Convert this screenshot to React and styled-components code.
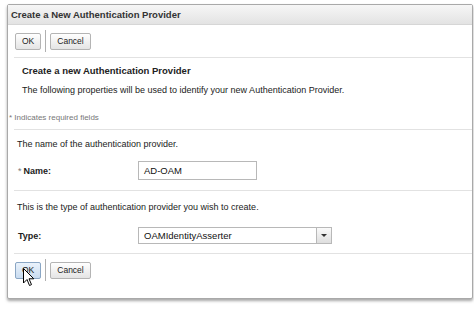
import React from "react";
import styled, { createGlobalStyle } from "styled-components";

const GlobalStyle = createGlobalStyle`
  body {
    margin: 0;
    background: #ffffff;
    font-family: "Liberation Sans", Arial, sans-serif;
    color: #222;
  }
`;

const Page = styled.div`
  width: 474px;
  height: 317px;
  padding: 4px 1px 0 7px;
  box-sizing: border-box;
`;

const Panel = styled.div`
  position: relative;
  height: 295px;
  border: 1px solid #a9a9a9;
  border-radius: 2px;
  box-shadow: 0 2px 3px rgba(0, 0, 0, 0.35);
  background: #fff;
  box-sizing: border-box;
`;

const Header = styled.div`
  height: 19px;
  display: flex;
  align-items: center;
  padding-left: 3px;
  background: linear-gradient(#f6f6f6, #e3e3e3);
  border-bottom: 1px solid #d6d6d6;
  font-size: 9.5px;
  font-weight: bold;
  color: #333;
`;

const Toolbar = styled.div`
  display: flex;
  align-items: center;
  gap: 4px;
  height: 32px;
  padding-left: 7px;
  margin-left: ${(p) => p.indent || 0}px;
  border-top: ${(p) => (p.divided ? "1px solid #e2e2e2" : "none")};
`;

const Button = styled.button`
  height: 17px;
  padding: 0 6px;
  font-family: "Liberation Sans", Arial, sans-serif;
  font-size: 8.5px;
  color: #222;
  border: 1px solid ${(p) => (p.hover ? "#8aa6c4" : "#b4b4b4")};
  border-radius: 2px;
  background: ${(p) =>
    p.hover
      ? "linear-gradient(#eaf2fb, #c9dcf0)"
      : "linear-gradient(#ffffff, #e4e4e4)"};
  min-width: ${(p) => p.min || 0}px;
`;

const Separator = styled.div`
  width: 1px;
  height: 22px;
  background: #b0b0b0;
`;

const Section = styled.div`
  margin-left: 6px;
  margin-top: ${(p) => p.gap || 0}px;
  border-top: 1px solid #e2e2e2;
  padding-top: ${(p) => p.pad || 0}px;
`;

const Title = styled.div`
  font-size: 9.5px;
  font-weight: bold;
  color: #222;
  padding-left: 8px;
  line-height: 11px;
`;

const Text = styled.div`
  font-size: 9px;
  color: #222;
  padding-left: ${(p) => p.indent || 3}px;
  line-height: 11px;
  margin-top: ${(p) => p.top || 0}px;
`;

const Hint = styled.div`
  font-size: 8px;
  color: #777;
  line-height: 10px;
  margin: 17px 0 0 -5px;
`;

const FieldRow = styled.div`
  display: flex;
  align-items: center;
  margin-top: ${(p) => p.top || 0}px;
  padding-left: 4px;
`;

const Label = styled.div`
  width: 120px;
  font-size: 9px;
  font-weight: bold;
  color: #222;
  span {
    color: #777;
    font-weight: normal;
    margin-right: 2px;
  }
`;

const Input = styled.div`
  width: 119px;
  height: 19px;
  border: 1px solid #b8b8b8;
  box-sizing: border-box;
  display: flex;
  align-items: center;
  padding-left: 5px;
  font-size: 9.5px;
  color: #111;
`;

const Select = styled.div`
  width: 194px;
  height: 17px;
  border: 1px solid #b8b8b8;
  box-sizing: border-box;
  display: flex;
  align-items: center;
  justify-content: space-between;
  padding-left: 5px;
  font-size: 9.5px;
  color: #111;
`;

const Arrow = styled.div`
  width: 14px;
  height: 15px;
  border-left: 1px solid #b8b8b8;
  background: linear-gradient(#fafafa, #dedede);
  display: flex;
  align-items: center;
  justify-content: center;
  &::after {
    content: "";
    border-left: 3px solid transparent;
    border-right: 3px solid transparent;
    border-top: 3px solid #333;
  }
`;

const Cursor = styled.svg`
  position: absolute;
  left: 15px;
  top: 263px;
`;

const App = () => {
  return (
    <>
      <GlobalStyle />
      <Page>
        <Panel>
          <Header>Create a New Authentication Provider</Header>
          <Toolbar>
            <Button min={24}>OK</Button>
            <Separator />
            <Button>Cancel</Button>
          </Toolbar>
          <Section pad={7}>
            <Title>Create a new Authentication Provider</Title>
            <Text indent={8} top={9}>
              The following properties will be used to identify your new
              Authentication Provider.
            </Text>
            <Hint>* Indicates required fields</Hint>
          </Section>
          <Section pad={9} gap={6}>
            <Text>The name of the authentication provider.</Text>
            <FieldRow top={11}>
              <Label>
                <span>*</span>Name:
              </Label>
              <Input>AD-OAM</Input>
            </FieldRow>
          </Section>
          <Section pad={11} gap={10}>
            <Text>This is the type of authentication provider you wish to create.</Text>
            <FieldRow top={14}>
              <Label>Type:</Label>
              <Select>
                OAMIdentityAsserter
                <Arrow />
              </Select>
            </FieldRow>
          </Section>
          <Toolbar divided indent={6} style={{ marginTop: 9, paddingLeft: 1 }}>
            <Button hover min={24}>OK</Button>
            <Separator />
            <Button>Cancel</Button>
          </Toolbar>
          <Cursor width="12" height="19" viewBox="0 0 12 19">
            <path
              d="M0.5 0.5 L0.5 15 L4 11.5 L6.5 17.5 L8.5 16.6 L6 10.8 L10.8 10.8 Z"
              fill="#fff"
              stroke="#000"
              strokeWidth="1"
              strokeLinejoin="round"
            />
          </Cursor>
        </Panel>
      </Page>
    </>
  );
};

export default App;
